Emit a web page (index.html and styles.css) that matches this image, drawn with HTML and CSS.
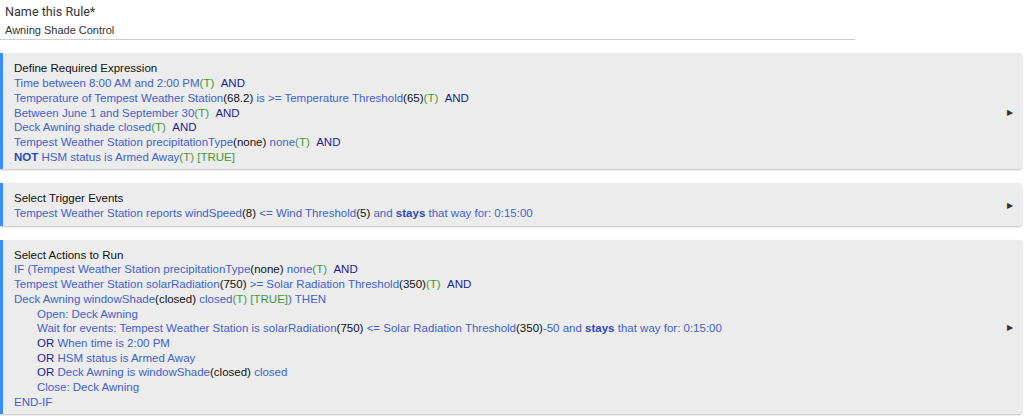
FILE: index.html
```html
<!DOCTYPE html>
<html lang="en">
<head>
  <meta charset="UTF-8" />
  <title>Awning Shade Control</title>
  <link rel="stylesheet" href="styles.css">
</head>
<body>

  <div class="name-field">
    <label>Name this Rule*</label>
    <div class="name-input">Awning Shade Control</div>
  </div>

  <div class="box">
    <div class="box-body">
      <div class="title">Define Required Expression</div>
      <div>Time between 8:00 AM and 2:00 PM<span class="ok">(T)</span> &nbsp;<span class="op">AND</span></div>
      <div>Temperature of Tempest Weather Station<span class="val">(68.2)</span> is &gt;= Temperature Threshold<span class="val">(65)</span><span class="ok">(T)</span> &nbsp;<span class="op">AND</span></div>
      <div>Between June 1 and September 30<span class="ok">(T)</span> &nbsp;<span class="op">AND</span></div>
      <div>Deck Awning shade closed<span class="ok">(T)</span> &nbsp;<span class="op">AND</span></div>
      <div>Tempest Weather Station precipitationType<span class="val">(none)</span> none<span class="ok">(T)</span> &nbsp;<span class="op">AND</span></div>
      <div><b>NOT</b> HSM status is Armed Away<span class="ok">(T) [TRUE]</span></div>
    </div>
    <span class="arrow">&#9654;</span>
  </div>

  <div class="box">
    <div class="box-body">
      <div class="title">Select Trigger Events</div>
      <div>Tempest Weather Station reports windSpeed<span class="val">(8)</span> &lt;= Wind Threshold<span class="val">(5)</span> and <b>stays</b> that way for: 0:15:00</div>
    </div>
    <span class="arrow">&#9654;</span>
  </div>

  <div class="box">
    <div class="box-body">
      <div class="title">Select Actions to Run</div>
      <div>IF (Tempest Weather Station precipitationType<span class="val">(none)</span> none<span class="ok">(T)</span> &nbsp;<span class="op">AND</span></div>
      <div>Tempest Weather Station solarRadiation<span class="val">(750)</span> &gt;= Solar Radiation Threshold<span class="val">(350)</span><span class="ok">(T)</span> &nbsp;<span class="op">AND</span></div>
      <div>Deck Awning windowShade<span class="val">(closed)</span> closed<span class="ok">(T) [TRUE]</span>) THEN</div>
      <div class="ind">Open: Deck Awning</div>
      <div class="ind">Wait for events: Tempest Weather Station is solarRadiation<span class="val">(750)</span> &lt;= Solar Radiation Threshold<span class="val">(350)</span>-50 and <b>stays</b> that way for: 0:15:00</div>
      <div class="ind"><span class="op">OR</span> When time is 2:00 PM</div>
      <div class="ind"><span class="op">OR</span> HSM status is Armed Away</div>
      <div class="ind"><span class="op">OR</span> Deck Awning is windowShade<span class="val">(closed)</span> closed</div>
      <div class="ind">Close: Deck Awning</div>
      <div>END-IF</div>
    </div>
    <span class="arrow">&#9654;</span>
  </div>

</body>
</html>
```

FILE: styles.css
```css
body {
  margin: 0;
  background: white;
  font-family: "Liberation Sans", Arial, sans-serif;
  font-size: 11.5px;
  line-height: 14.7px;
  color: #222;
}
.name-field {
  padding: 5px 0 0 5px;
  width: 850px;
  margin-bottom: 13px;
}
.name-field label {
  display: block;
  font-family: Roboto, "Liberation Sans", sans-serif;
  font-size: 12.6px;
  color: #333;
  margin-bottom: 3px;
}
.name-input {
  color: #333;
  font-size: 11px;
  padding: 0 0 2px 5px;
  border-bottom: 1px solid #d0d0d0;
  margin-left: -5px;
}
.box {
  background: #ececec;
  border-left: 3px solid #3e8de6;
  border-radius: 0 3px 3px 0;
  box-shadow: 0 1px 2px rgba(0,0,0,0.25);
  margin: 0 2px 14px 0;
  padding: 8px 0 5px 11px;
  display: flex;
  align-items: center;
}
.box-body {
  flex: 1;
  color: #4262c8;
}
.title { color: #111; }
.ind { padding-left: 23px; }
.ok { color: #3f9a3a; }
.op { color: #1c1f8f; }
.val { color: #111; }
b { color: #2c48b8; }
.arrow {
  font-size: 8px;
  color: #333;
  width: 14px;
  margin-right: 1px;
}
```
